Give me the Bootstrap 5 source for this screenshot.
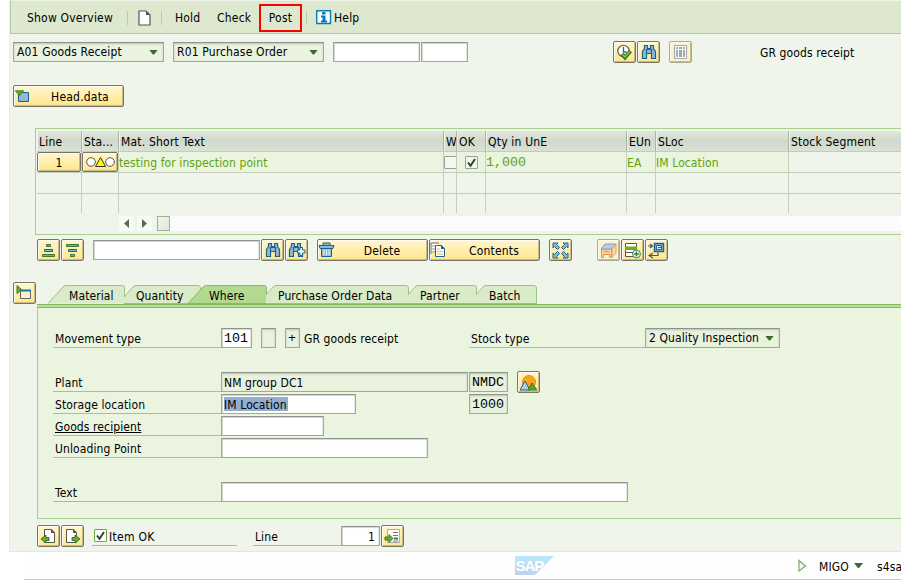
<!DOCTYPE html>
<html lang="en">
<head>
<meta charset="utf-8">
<title>Goods Receipt Purchase Order</title>
<link href="https://cdn.jsdelivr.net/npm/bootstrap@5.3.0/dist/css/bootstrap.min.css" rel="stylesheet">
<style>
body{width:901px;height:580px;overflow:hidden;background:#fff;color:#000;font:12px/20px "DejaVu Sans Condensed","DejaVu Sans",sans-serif;font-stretch:condensed;white-space:nowrap;letter-spacing:.1px}
svg{display:block;flex:none}
.shell{margin-left:9px;height:552px;background:#eff5eb;border-left:1px solid #e6efe0;border-bottom:1px solid #dfe9e0}
.topbar{height:34px;background:#dde8cf;border-top:1px solid #eef4e8;border-bottom:1px solid #b3c8a6;border-left:1px solid #b9cfa8;padding:1px 0 0 16px;letter-spacing:.2px}
.topbar>*{flex:none}
.rule{width:1px;height:14px;background:#b4cfa2}
.post-box{width:43px;height:28px;border:2px solid #f00}
.t-show{width:100px}.t-new{width:24px;padding-left:10px}.t-hold{width:42px;margin-left:13px}.t-check{width:42px}
.rule-new{margin-left:9px}.rule-help{margin-left:4px}.info{margin:-1px 0 0 9px}.help{margin-left:2px}
.doc-row{height:22px;margin:7px 0 0 3px}
.fld{height:20px;border:1px solid #a3a7a1;border-top-color:#8f938d;background:#fff;box-shadow:inset 1px 1px 1px #d2d6cf,inset -1px 0 1px #e3e6e1;padding:0 2px;line-height:19px;flex:none}
.fld-ro{background:#e9f3df;box-shadow:inset 0 1px 2px #b9c2b2}
.caret{width:9px;height:5px;background:#3b6a2c;clip-path:polygon(0 0,100% 0,56% 100%,44% 100%);margin-right:3px;flex:none}
.w-sel{width:151px;padding-left:3px;letter-spacing:.15px}.w-po{width:87px}.w-item{width:47px}
.g1{margin-left:1px}.g9{margin-left:9px}.g25{margin-left:25px}.g145{margin-left:145px}.g68{margin-left:68px}
.gr-label{padding-top:2px}
.sbtn{height:22px;border:1px solid #77756a;border-radius:2px;background:linear-gradient(#fff6d2,#ffeeab 50%,#fde68f);box-shadow:inset 1px 1px 0 #fffbe8,inset -1px -1px 0 #c9ba83;flex:none;padding:0;color:#000;line-height:20px;letter-spacing:.2px}
.sq{width:23px;display:flex;align-items:center;justify-content:center}
.off{border-color:#a9a89d;background:#faf3cf}
.head-btn{width:111px;margin:22px 0 0 3px}
.head-text{padding:2px 0 0 7px}
.btn-text{padding:2px 0 0 2px}
.item-grid{margin:21px 0 0 25px;height:107px;border:1px solid #a9cf8e;border-right:0;padding:2px 0 0 1px}
.gline{display:grid;grid-template-columns:45px 37px 325px 13px 29px 141px 29px 133px 1fr;height:21px;border-bottom:1px solid #c3ccb9}
.gline>div{border-right:1px solid #c6cfbc;overflow:hidden;line-height:22px}
.gline>div:last-child{border-right:0}
.ghead{background:linear-gradient(#e0e7dc,#d0d9cb 50%,#dae1d5)}
.ghead>div{padding-left:2px;border-right-color:#a9b5a2;box-shadow:inset 1px 0 0 #edf2ea;letter-spacing:.2px}
.gopen{height:19px;border-bottom:0}
.gdata{color:#5da30a}
.gdata .live{background:#eaf4df}
.gdata .sbtn{height:20px;width:100%;line-height:20px}
.tick{width:13px;height:13px;border:1px solid #9da099;background:#f4f7f1;border-radius:1px;flex:none}
.tick-green{border-color:#69a945;background:#fff}
.num{font-family:"Liberation Mono",monospace;font-size:13.33px;letter-spacing:0}
.scroll{height:15px;margin:3px 0 0 82px}
.scroll-arrow{width:15px;height:15px;background:#f7faf5;margin-right:3px}
.scroll-thumb{width:13px;height:15px;border:1px solid #a3af9c;background:linear-gradient(135deg,#eff5ea,#dfe9d7);margin-left:2px}
.scroll-track{height:15px;background:#fcfcfc}
.tools{height:22px;margin:4px 0 0 27px}
.w-find{width:167px}.w-act{width:111px}
.tabline{height:22px;margin:21px 0 0 3px}
.tabstrip{height:19px;margin:3px 0 0 12px}
.tb{position:relative;height:19px;flex:none;margin-left:-1px}
.tb svg{position:absolute;left:0;top:0}
.tb span{position:relative;line-height:22px}
.tb1{width:77px;padding-left:21px;margin-left:0}.tb2{width:77px;padding-left:12px}.tb3{width:79px;padding-left:21px;margin-left:-13px}.tb4{width:143px;padding-left:12px}.tb5{width:69px;padding-left:12px}.tb6{width:61px;padding-left:13px}
.pane{margin:0 0 0 27px;height:215px;border-left:1px solid #a9cf8e;border-bottom:1px solid #a9cf8e;background:#eaf4df}
.pane-edge{height:4px;background:#b9dc9c;border-top:1px solid #88ba62;border-bottom:1px solid #88ba62;margin-left:-1px}
.frow{height:20px;margin:0 0 2px 15px}
.lab{height:20px;border-bottom:1px solid #b1b7ac;padding-left:2px;width:168px;line-height:22px;flex:none}
.lab-stock{width:176px;margin-left:70px}
.frow-first{margin-top:20px;margin-bottom:24px}.frow-last{margin-top:24px}
.w-mvt{width:31px}.w-one{width:15px}.w-plant{width:247px;line-height:20px}.w-code{width:39px}.w-sloc{width:135px}.w-rcp{width:103px}.w-unl{width:207px}.w-text{width:407px}.w-stock{width:135px;padding-left:3px}
.gap-far{margin-left:113px}.gap-desc{margin-left:4px;width:95px;line-height:22px}
.pic{margin:-1px 0 -1px 9px}
.sel-text{background:#93aed0;line-height:16px;height:14px;margin-top:2px;padding-right:1px}
.frow .fld-ro{background:#e8f2dd}
.foot{height:22px;margin:6px 0 0 27px}
.foot .lab{height:21px;line-height:24px}
.foot .w-ok{width:145px;margin-left:8px}.foot .w-line{width:88px;margin-left:16px}
.w-ln{width:39px;margin-top:1px;padding-right:4px;line-height:20px}
.ok-text{margin-left:2px;padding-top:3px;letter-spacing:.3px}
.status{height:28px;background:#fdfefd;border-bottom:1px solid #b6dba4;margin-left:24px;padding-left:491px}
.status-gap{margin-left:244px;margin-right:6px}
.sap-logo{margin-top:-1px}
.bar-v{width:1px;height:15px;background:#c9cdc7;margin-right:6px}
.migo{width:35px;padding-top:2px;flex:none}
.caret-status{margin:0 8px 0 0}
.sys{padding-top:2px}
.ic{stroke:#19638f;fill:#91b8d7}
</style>
<script src="https://cdn.jsdelivr.net/npm/bootstrap@5.3.0/dist/js/bootstrap.bundle.min.js"></script>
</head>
<body>
<svg width="0" height="0" class="position-absolute">
<defs>
<symbol id="i-find" viewBox="0 0 16 16"><path class="ic" d="M3.500 1.500h3v3h3v-3h3v3l2 3v7h-4v-5h-5v5h-4v-7l2-3zM5.500 9.500v-4h5v4" stroke-width="1.200"/></symbol>
<symbol id="i-tick" viewBox="0 0 11 11"><path d="M2 5.500l2.500 3.300L9 2" fill="none" stroke="#234a33" stroke-width="2"/></symbol>
</defs>
</svg>
<main class="shell">
  <nav class="topbar d-flex align-items-center">
    <span class="t-show">Show Overview</span><i class="rule"></i>
    <span class="t-new"><svg width="13" height="16" viewBox="0 0 13 16"><path d="M1 1h7l4 4v10H1z" fill="#fff" stroke="#555" stroke-width="1.200"/><path d="M8 1v4h4z" fill="#555"/></svg></span>
    <i class="rule rule-new"></i>
    <span class="t-hold">Hold</span><span class="t-check">Check</span>
    <span class="post-box d-flex align-items-center justify-content-center">Post</span>
    <i class="rule rule-help"></i>
    <svg class="info" width="16" height="15" viewBox="0 0 16 15"><path d="M.7.700h13.800v12.800H.700z" fill="#fff" stroke="#087bb8" stroke-width="1.400"/><path d="M6 2h3.500v2.500H6zM5 5.500h4.500v5H11v2H5v-2h1.500v-3H5z" fill="#087bb8"/></svg>
    <span class="help">Help</span>
  </nav>

  <div class="doc-row d-flex align-items-center">
    <div class="fld fld-ro w-sel d-flex align-items-center justify-content-between"><span>A01 Goods Receipt</span><i class="caret"></i></div>
    <div class="fld fld-ro w-sel d-flex align-items-center justify-content-between g9"><span>R01 Purchase Order</span><i class="caret"></i></div>
    <div class="fld w-po g9"></div><div class="fld w-item g1"></div>
    <button class="sbtn sq g145"><svg width="17" height="17" viewBox="0 0 17 17"><circle cx="7.500" cy="7" r="5.700" fill="#fff" stroke="#666" stroke-width="1.300"/><path d="M7.500 3v5h3" fill="none" stroke="#555" stroke-width="1.300"/><path d="M6 10l3 3.500L14.500 7" fill="none" stroke="#2d7d23" stroke-width="4"/><path d="M6.500 10.500L9 13l5-5.500" fill="none" stroke="#85c63c" stroke-width="1.500"/></svg></button>
    <button class="sbtn sq g1"><svg width="16" height="16"><use href="#i-find"/></svg></button>
    <button class="sbtn sq off g9"><svg width="15" height="16" viewBox="0 0 15 16"><path d="M1.500 1.500h12v13h-12z" fill="#fff" stroke="#aaa" stroke-width="1.200"/><path d="M3 3h2v2H3zM6 3h3v2H6zM10 3h2v2h-2zM6 6h3v7H6zM10 6h2v7h-2z" fill="#a6a6a6"/><path d="M3 6h2v7H3z" fill="#88b5d1"/></svg></button>
    <span class="g68 gr-label">GR goods receipt</span>
  </div>

  <button class="sbtn head-btn d-flex align-items-center"><svg width="16" height="13" viewBox="0 0 16 13"><path d="M4.500 2.500h10v9h-10z" class="ic"/><path d="M1 .5h9L6 5.500H5z" fill="#5b9f22" stroke="#397d26" stroke-width=".5"/></svg><span class="flex-grow-1 text-center head-text">Head.data</span></button>

  <section class="item-grid">
    <div class="gline ghead"><div>Line</div><div>Sta...</div><div>Mat. Short Text</div><div>W</div><div>OK</div><div>Qty in UnE</div><div>EUn</div><div>SLoc</div><div>Stock Segment</div></div>
    <div class="gline gdata">
      <div><button class="sbtn d-block">1</button></div>
      <div><button class="sbtn d-flex align-items-center justify-content-center"><svg width="29" height="12" viewBox="0 0 29 12"><circle cx="5" cy="6" r="4.300" fill="#fff" stroke="#555"/><circle cx="24" cy="6" r="4.300" fill="#fff" stroke="#555"/><path d="M14.500 1.500L9.500 10.500h10z" fill="#ff0" stroke="#333"/></svg></button></div>
      <div class="live">testing for inspection point</div>
      <div class="live d-flex align-items-center"><i class="tick"></i></div>
      <div class="live d-flex align-items-center justify-content-center"><i class="tick"><svg width="11" height="11"><use href="#i-tick"/></svg></i></div>
      <div class="live num">1,000</div><div class="live">EA</div><div class="live">IM Location</div><div></div>
    </div>
    <div class="gline"><div></div><div></div><div></div><div></div><div></div><div></div><div></div><div></div><div></div></div>
    <div class="gline gopen"><div></div><div></div><div></div><div></div><div></div><div></div><div></div><div></div><div></div></div>
    <div class="scroll d-flex">
      <svg class="scroll-arrow" viewBox="0 0 15 15"><path d="M10 3v9L5 7.500z" fill="#54704b"/></svg>
      <svg class="scroll-arrow" viewBox="0 0 15 15"><path d="M5 3v9l5-4.500z" fill="#54704b"/></svg>
      <i class="scroll-thumb"></i><div class="scroll-track flex-grow-1"></div>
    </div>
  </section>

  <div class="tools d-flex align-items-center">
    <button class="sbtn sq"><svg width="15" height="15" viewBox="0 0 15 15"><path d="M5.500 1.500h4v2h-4zM1.500 11.500h12v2h-12z" fill="#83bd27" stroke="#367a36"/><path class="ic" d="M3.500 6.500h8v2h-8z"/></svg></button>
    <button class="sbtn sq g1"><svg width="15" height="15" viewBox="0 0 15 15"><path d="M1.500 1.500h12v2h-12zM5.500 11.500h4v2h-4z" fill="#83bd27" stroke="#367a36"/><path class="ic" d="M3.500 6.500h8v2h-8z"/></svg></button>
    <div class="fld w-find g9"></div>
    <button class="sbtn sq g1"><svg width="16" height="16"><use href="#i-find"/></svg></button>
    <button class="sbtn sq g1"><svg width="18" height="16"><use href="#i-find" width="16" height="16"/><path d="M12 5.500h2.500v2.500H17v3h-2.500v2.500H12V11H9.500V8H12z" fill="#fff" stroke="#19638f"/></svg></button>
    <button class="sbtn w-act d-flex align-items-center g9"><svg width="17" height="16" viewBox="0 0 17 16"><path class="ic" d="M1 3.500h15l-1 3H2zM5 3V1h7v2M3.500 6.500h10v8h-10z"/><path d="M6 7.500v6M8.500 7.500v6M11 7.500v6" stroke="#e4eff7"/></svg><span class="flex-grow-1 text-center btn-text">Delete</span></button>
    <button class="sbtn w-act d-flex align-items-center g1"><svg width="17" height="16" viewBox="0 0 17 16"><path d="M1 12V1h8" fill="#fff" stroke="#666"/><path d="M2 4h3M2 7h3M2 10h3" stroke="#999"/><path d="M5.500 3.500h6l3 3v8h-9z" fill="#fff" stroke="#19638f"/><path d="M11 3v4h4z" fill="#19638f"/><path d="M7 7h3M7 9.500h6M7 12h6" stroke="#f4b64a"/></svg><span class="flex-grow-1 text-center btn-text">Contents</span></button>
    <button class="sbtn sq g9"><svg width="17" height="17" viewBox="0 0 17 17"><path class="ic" d="M1 1h5L4.500 2.500l3 3-2 2-3-3L1 6zM16 1h-5l1.500 1.500-3 3 2 2 3-3L16 6zM1 16h5l-1.500-1.500 3-3-2-2-3 3L1 11zM16 16h-5l1.500-1.500-3-3 2-2 3 3L16 11z"/></svg></button>
    <button class="sbtn sq off g25"><svg width="17" height="17" viewBox="0 0 17 17"><path d="M1.500 7h10v8.500h-2v-3h-6v3h-2z" fill="#f9d28d" stroke="#dd8f70"/><path d="M5 2h11l-4 5H1z" fill="#b8cddd" stroke="#83a5bd"/><path d="M12 7l4-4.500v8.500l-4 4.500z" fill="#f9d9a0" stroke="#dda07e"/><path d="M4 9.500h5" stroke="#dd8f70"/></svg></button>
    <button class="sbtn sq g1"><svg width="17" height="17" viewBox="0 0 17 17"><path d="M1.500 1.500h11v13h-11z" fill="#fff" stroke="#555"/><path d="M1 4.500h12v3.500H1z" fill="#72ad20"/><path d="M1 10.500h9" stroke="#555"/><circle cx="12.500" cy="12" r="3.900" fill="#fff" stroke="#367a36"/><path d="M12.500 9.500v5M10 12h5" stroke="#367a36" stroke-width="1.500"/></svg></button>
    <button class="sbtn sq g1"><svg width="17" height="17" viewBox="0 0 17 17"><path d="M6.500 1.500h9v8h-9z" class="ic" stroke-width="1.500"/><path d="M8.500 3.500h5v4h-5z" fill="#d9e9f4" stroke="#19638f"/><path d="M10 5.500h3" stroke="#19638f"/><path d="M0 4h4M2 2l2.500 2L2 6M10 10.500v3H2M5 11l-4 2.500 4 2.500" fill="none" stroke="#555" stroke-width="1.200"/></svg></button>
  </div>

  <div class="tabline d-flex">
    <button class="sbtn sq"><svg width="17" height="16" viewBox="0 0 17 16"><path d="M4.500 5.500h10v8h-10z" fill="#fff3c4" stroke="#666"/><path d="M5 5.500h10" stroke="#087bb8" stroke-width="2"/><path d="M1 .500l4.500 4L1 8.500z" fill="#72ad20" stroke="#367a36"/></svg></button>
    <div class="tabstrip d-flex">
      <div class="tb tb1"><svg width="77" height="19"><path d="M0 18.500L15 2q1.500-1.500 3-1.500h56q2.500 0 2.500 2.500v15.500" fill="#d9ebc9" stroke="#9cc481"/></svg><span>Material</span></div>
      <div class="tb tb2"><svg width="77" height="19"><path d="M0 12L9 2q1.500-1.500 3-1.500h62q2.500 0 2.500 2.500v15.500H0" fill="#d9ebc9" stroke="#9cc481"/></svg><span>Quantity</span></div>
      <div class="tb tb3"><svg width="79" height="19"><path d="M0 18.500L15 2q1.500-1.500 3-1.500h58q2.500 0 2.500 2.500v15.500z" fill="#b2d98f" stroke="#88ba62"/></svg><span>Where</span></div>
      <div class="tb tb4"><svg width="143" height="19"><path d="M0 10L7 2q1.500-1.500 3-1.500h130q2.500 0 2.500 2.500v15.500H0" fill="#d9ebc9" stroke="#9cc481"/></svg><span>Purchase Order Data</span></div>
      <div class="tb tb5"><svg width="69" height="19"><path d="M0 10L7 2q1.500-1.500 3-1.500h56q2.500 0 2.500 2.500v15.500H0" fill="#d9ebc9" stroke="#9cc481"/></svg><span>Partner</span></div>
      <div class="tb tb6"><svg width="61" height="19"><path d="M0 10L7 2q1.500-1.500 3-1.500h48q2.500 0 2.500 2.500v15.500H0" fill="#d9ebc9" stroke="#9cc481"/></svg><span>Batch</span></div>
    </div>
  </div>

  <section class="pane">
    <div class="pane-edge"></div>
    <div class="frow frow-first d-flex">
      <div class="lab">Movement type</div><div class="fld num w-mvt">101</div><div class="fld fld-ro w-one g9"></div><div class="fld fld-ro w-one g9 num">+</div><span class="gap-desc">GR goods receipt</span>
      <div class="lab lab-stock">Stock type</div><div class="fld fld-ro w-stock d-flex align-items-center justify-content-between"><span>2 Quality Inspection</span><i class="caret"></i></div>
    </div>
    <div class="frow d-flex"><div class="lab">Plant</div><div class="fld fld-ro w-plant">NM group DC1</div><div class="fld fld-ro w-code g1 num">NMDC</div>
      <button class="sbtn sq pic"><svg width="17" height="17" viewBox="0 0 17 17"><circle cx="9" cy="8" r="6.500" fill="#f7a51c" stroke="#e88d12"/><path d="M0 16l5-9 5 9z" fill="#a9cee9" stroke="#19638f"/><path d="M8 16l4-7 5 7z" fill="#5fa32d" stroke="#397d26"/></svg></button></div>
    <div class="frow d-flex"><div class="lab">Storage location</div><div class="fld w-sloc d-flex"><span class="sel-text">IM Location</span></div><div class="fld fld-ro w-code gap-far num">1000</div></div>
    <div class="frow d-flex"><div class="lab"><u>Goods recipient</u></div><div class="fld w-rcp"></div></div>
    <div class="frow d-flex"><div class="lab">Unloading Point</div><div class="fld w-unl"></div></div>
    <div class="frow frow-last d-flex"><div class="lab">Text</div><div class="fld w-text"></div></div>
  </section>

  <div class="foot d-flex">
    <button class="sbtn sq"><svg width="17" height="17" viewBox="0 0 17 17"><path d="M4.500 1.500h7l3 3v10h-10z" fill="#fff" stroke="#555"/><path d="M11 1v4h4z" fill="#555"/><path d="M1 11l5-4v2.500h3v3H6V15z" fill="#72ad20" stroke="#367a36"/></svg></button>
    <button class="sbtn sq g1"><svg width="17" height="17" viewBox="0 0 17 17"><path d="M2.500 1.500h7l3 3v10h-10z" fill="#fff" stroke="#555"/><path d="M9 1v4h4z" fill="#555"/><path d="M16 11l-5-4v2.500H8v3h3V15z" fill="#72ad20" stroke="#367a36"/></svg></button>
    <div class="lab w-ok d-flex align-items-center"><i class="tick tick-green"><svg width="11" height="11"><use href="#i-tick"/></svg></i><span class="ok-text">Item OK</span></div>
    <div class="lab w-line">Line</div><div class="fld w-ln text-end">1</div>
    <button class="sbtn sq g1"><svg width="17" height="17" viewBox="0 0 17 17"><path d="M3.500 1.500h12v13h-12z" fill="#fff" stroke="#aaa"/><path d="M9 4.500h5M9 7.500h5M9 13h5" stroke="#777"/><path d="M10 10.500h4" stroke="#367a36" stroke-width="2"/><path d="M9 10.500l-4-4V9H1v3h4v2.500z" fill="#72ad20" stroke="#367a36"/></svg></button>
  </div>
</main>
<footer class="status d-flex align-items-center">
  <svg class="sap-logo" width="39" height="19" viewBox="0 0 39 19"><defs><linearGradient id="sg" x2="0" y2="1"><stop stop-color="#b8e9fb"/><stop offset="1" stop-color="#bfd2ef"/></linearGradient></defs><path d="M0 0h39L20 19H0z" fill="url(#sg)"/><text x="0.500" y="15" font-family="Liberation Sans,sans-serif" font-weight="bold" font-size="15" letter-spacing="-1" fill="#fff">SAP</text></svg>
  <svg class="status-gap" width="9" height="14" viewBox="0 0 9 14"><path d="M1 1.500v10.500l6.500-5z" fill="#f5f8f2" stroke="#85ad70" stroke-width="1.300"/></svg>
  <i class="bar-v"></i><span class="migo">MIGO</span><i class="caret caret-status"></i><i class="bar-v"></i><span class="sys">s4sa</span>
</footer>
</body>
</html>
